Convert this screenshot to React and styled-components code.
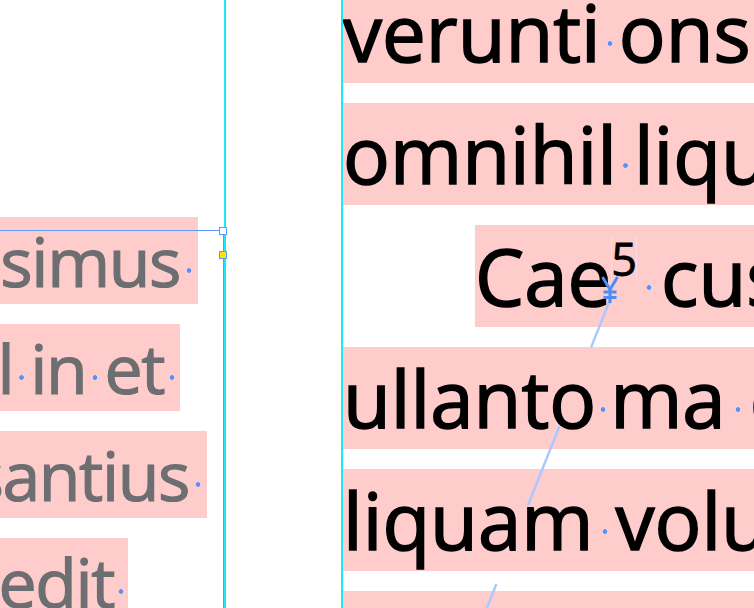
import React from 'react';
import styled, { createGlobalStyle } from 'styled-components';

const GlobalStyle = createGlobalStyle`
  html, body {
    margin: 0;
    padding: 0;
    background: #ffffff;
    overflow: hidden;
  }
`;

const PINK = '#ffcccc';
const CYAN = '#1de9f6';
const FRAME_BLUE = '#5b9bff';
const DOT_BLUE = '#4f94ff';

const Page = styled.div`
  position: relative;
  width: 754px;
  height: 608px;
  overflow: hidden;
  display: flex;
  background: #ffffff;
  font-family: "Open Sans", "Noto Sans", sans-serif;
`;

const LeftFrame = styled.div`
  flex: none;
  width: 224px;
  border-right: 2px solid ${CYAN};
  overflow: hidden;
  padding-top: 217px;
  display: flex;
  flex-direction: column;
  gap: 20px;
  color: #6d6e71;
  font-size: 68px;
  letter-spacing: -1.4px;
  -webkit-text-stroke: 1.2px #6d6e71;
`;

const Gutter = styled.div`
  flex: none;
  width: 115px;
`;

const RightFrame = styled.div`
  flex: 1;
  min-width: 0;
  border-left: 2px solid ${CYAN};
  overflow: hidden;
  color: #000000;
  font-size: 78px;
  -webkit-text-stroke: 1.6px #000000;
`;

const RightLines = styled.div`
  display: flex;
  flex-direction: column;
  gap: 20px;
  margin-top: -19px;
`;

const LeftLine = styled.div`
  display: flex;
  justify-content: flex-end;
  padding-right: ${({ $inset }) => $inset}px;
`;

const RightLine = styled.div`
  display: flex;
  padding-left: ${({ $indent }) => $indent || 0}px;
`;

const Mark = styled.span`
  display: block;
  flex: none;
  white-space: nowrap;
  background: ${PINK};
  height: ${({ $h }) => $h}px;
  line-height: ${({ $h }) => $h}px;
`;

const Space = styled.span`
  display: inline-block;
  width: ${({ $w }) => $w}px;
  height: 5px;
  margin-bottom: ${({ $lift }) => $lift}px;
  background: radial-gradient(circle at center, ${DOT_BLUE} 2px, transparent 2.6px);
`;

const Sup = styled.span`
  display: inline-block;
  font-size: 45px;
  line-height: 1;
  vertical-align: 30px;
  -webkit-text-stroke: 0.8px #000000;
  box-shadow: inset 1px 0 0 #ffdada, inset -1px 0 0 #ffdada;
`;

const Selection = styled.div`
  position: absolute;
  left: -2px;
  top: 230px;
  width: 225px;
  height: 400px;
  border-top: 1px solid ${FRAME_BLUE};
  border-right: 1px solid ${FRAME_BLUE};
  pointer-events: none;
`;

const Handle = styled.div`
  position: absolute;
  left: 219px;
  top: ${({ $top }) => $top}px;
  width: 6px;
  height: 6px;
  border: 1px solid ${FRAME_BLUE};
  background: ${({ $fill }) => $fill};
`;

const Overlay = styled.svg`
  position: absolute;
  left: 0;
  top: 0;
  pointer-events: none;
`;

const leftLines = [
  { inset: 26, parts: ['possimus', 18] },
  { inset: 44, parts: ['nihil', 17, 'in', 18, 'et', 16] },
  { inset: 17, parts: ['accusantius', 18] },
  { inset: 96, parts: ['credit', 14] },
];

const renderParts = (parts, lift) =>
  parts.map((p, i) =>
    typeof p === 'number' ? (
      <Space key={i} $w={p} $lift={lift} />
    ) : (
      <React.Fragment key={i}>{p}</React.Fragment>
    )
  );

export default function App() {
  return (
    <>
      <GlobalStyle />
      <Page>
        <LeftFrame>
          {leftLines.map((line, i) => (
            <LeftLine key={i} $inset={line.inset}>
              <Mark $h={87}>{renderParts(line.parts, 14)}</Mark>
            </LeftLine>
          ))}
        </LeftFrame>
        <Gutter />
        <RightFrame>
          <RightLines>
            <RightLine>
              <Mark $h={102}>{renderParts(['verunti', 18, 'onsequi', 18, 'dolor'], 16)}</Mark>
            </RightLine>
            <RightLine>
              <Mark $h={102}>{renderParts(['omnihil', 17, 'liquam', 14, 'eos'], 16)}</Mark>
            </RightLine>
            <RightLine $indent={132}>
              <Mark $h={102}>
                Cae<Sup>5</Sup>
                {renderParts([24, 'custis', 18, 'aut'], 16)}
              </Mark>
            </RightLine>
            <RightLine>
              <Mark $h={102}>{renderParts(['ullanto', 14, 'ma', 24, 'cusam', 18, 'ut'], 16)}</Mark>
            </RightLine>
            <RightLine>
              <Mark $h={102}>{renderParts(['liquam', 22, 'voluptas', 18, 'et'], 16)}</Mark>
            </RightLine>
            <RightLine>
              <Mark $h={102}>{renderParts(['sinvel', 18, 'imus', 18, 'dolo'], 16)}</Mark>
            </RightLine>
          </RightLines>
        </RightFrame>

        <Selection />
        <Handle $top={227} $fill="#ffffff" />
        <Handle $top={251} $fill="#ffe100" />

        <Overlay width="754" height="608" viewBox="0 0 754 608">
          <line
            x1="610"
            y1="300"
            x2="474"
            y2="640"
            stroke="#a7c9ff"
            strokeWidth="2.4"
            strokeDasharray="85 85"
            strokeDashoffset="34"
          />
          <g stroke="#4b8ef5" strokeWidth="3" fill="none">
            <path d="M602.5 277 L610 289.5 L617.5 277" />
            <path d="M610 289.5 V303" />
            <path d="M603.5 292 H616.5" />
            <path d="M603.5 297.5 H616.5" />
          </g>
        </Overlay>
      </Page>
    </>
  );
}
